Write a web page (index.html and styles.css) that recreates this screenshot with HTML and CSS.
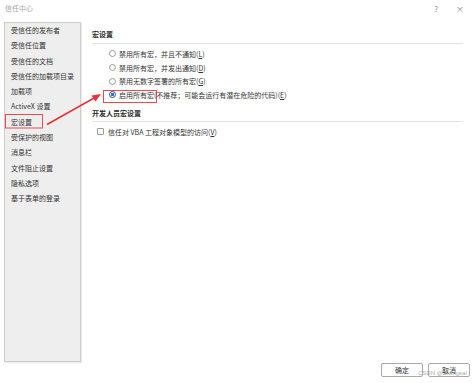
FILE: index.html
```html
<!DOCTYPE html>
<html lang="zh-CN">
<head>
  <meta charset="UTF-8">
  <title>信任中心</title>
  <link rel="stylesheet" href="styles.css">
</head>
<body>
  <div class="dialog">
    <div class="titlebar">
      <span class="title">信任中心</span>
      <span class="tools"><span class="help">?</span><span class="close">×</span></span>
    </div>

    <div class="main">
      <ul class="nav">
        <li>受信任的发布者</li>
        <li>受信任位置</li>
        <li>受信任的文档</li>
        <li>受信任的加载项目录</li>
        <li>加载项</li>
        <li>ActiveX 设置</li>
        <li class="active">宏设置</li>
        <li>受保护的视图</li>
        <li>消息栏</li>
        <li>文件阻止设置</li>
        <li>隐私选项</li>
        <li>基于表单的登录</li>
      </ul>

      <div class="content">
        <div class="section-title">宏设置</div>
        <div class="options">
          <div class="row"><span class="radio"></span>禁用所有宏，并且不通知(<u>L</u>)</div>
          <div class="row"><span class="radio"></span>禁用所有宏，并发出通知(<u>D</u>)</div>
          <div class="row"><span class="radio"></span>禁用无数字签署的所有宏(<u>G</u>)</div>
          <div class="row"><span class="radio checked"></span>启用所有宏(不推荐；可能会运行有潜在危险的代码)(<u>E</u>)</div>
        </div>
        <div class="section-title second">开发人员宏设置</div>
        <div class="checks">
          <div class="row"><span class="checkbox"></span>信任对 VBA 工程对象模型的访问(<u>V</u>)</div>
        </div>
      </div>
    </div>

    <div class="footer">
      <button class="btn">确定</button>
      <button class="btn">取消</button>
    </div>

    <span class="watermark">CSDN @Zxxxgeal</span>

    <!-- 截图上的红色标注 -->
    <svg class="annot" width="474" height="383" viewBox="0 0 474 383">
      <rect x="5.5" y="114.5" width="37" height="13.5" fill="none" stroke="#e84a4f" stroke-width="1"/>
      <rect x="103.5" y="90.5" width="53" height="12" fill="none" stroke="#e84a4f" stroke-width="1"/>
      <line x1="47" y1="124.5" x2="95" y2="97.5" stroke="#e8323a" stroke-width="1.6"/>
      <polygon points="101,94 91.5,95.5 95.5,101.5" fill="#e8323a"/>
    </svg>
  </div>
</body>
</html>
```

FILE: styles.css
```css
* {
  margin: 0;
  padding: 0;
  box-sizing: border-box;
}

body {
  font-family: 'Noto Sans CJK SC', 'Liberation Sans', sans-serif;
  font-size: 7px;
  color: #333;
  background: #fff;
}

.dialog {
  position: relative;
  width: 474px;
  height: 383px;
  background: #fff;
}

.titlebar {
  height: 22px;
  display: flex;
  justify-content: space-between;
  padding: 1px 10px 0 5px;
}

.title {
  color: #a8a8a8;
  line-height: 14px;
  font-size: 7px;
}

.tools {
  display: flex;
  gap: 18px;
  color: #8a8a8a;
  line-height: 16px;
  font-size: 8px;
}

.main {
  display: flex;
  height: 340px;
  margin-left: 4px;
}

.nav {
  list-style: none;
  width: 77px;
  background: #eeeeee;
  border: 1px solid #cdcdcd;
  box-shadow: 1px 1px 1px rgba(0, 0, 0, 0.08);
}

.nav li {
  height: 15.3px;
  line-height: 15.3px;
  padding-left: 6px;
  white-space: nowrap;
  color: #333;
}

.content {
  flex: 1;
  margin: 0 11px 0 11px;
}

.section-title {
  padding: 5px 0 2px;
  line-height: 14px;
  font-weight: 600;
  color: #2a2a2a;
  border-bottom: 1px solid #e2e2e2;
}

.section-title.second {
  padding: 4px 0 1px;
}

.options {
  padding: 3px 0 0 17px;
}

.checks {
  padding: 3px 0 0 5px;
}

.row {
  display: flex;
  align-items: center;
  height: 13.7px;
  white-space: nowrap;
}

.row u {
  text-decoration: underline;
}

.radio {
  width: 7px;
  height: 7px;
  border: 1px solid #9a9a9a;
  border-radius: 50%;
  margin-right: 3px;
  background: #fff;
}

.radio.checked {
  border: 1.6px solid #1f4f9c;
  background: radial-gradient(circle, #2d6cd0 0 1.4px, #fff 1.6px);
}

.checkbox {
  width: 7px;
  height: 7px;
  border: 1px solid #9a9a9a;
  border-radius: 1px;
  margin-right: 4px;
  background: #fff;
}

.footer {
  display: flex;
  justify-content: flex-end;
  gap: 5px;
  padding: 1px 4px 0 0;
}

.btn {
  width: 42px;
  height: 14px;
  border: 1px solid #a9a9a9;
  border-radius: 2px;
  background: #fff;
  font-family: inherit;
  font-size: 7px;
  color: #333;
}

.watermark {
  position: absolute;
  left: 418px;
  top: 370px;
  font-family: 'Liberation Sans', sans-serif;
  font-size: 6px;
  color: rgba(140, 140, 140, 0.75);
  white-space: nowrap;
}

.annot {
  position: absolute;
  left: 0;
  top: 0;
  pointer-events: none;
}
```
